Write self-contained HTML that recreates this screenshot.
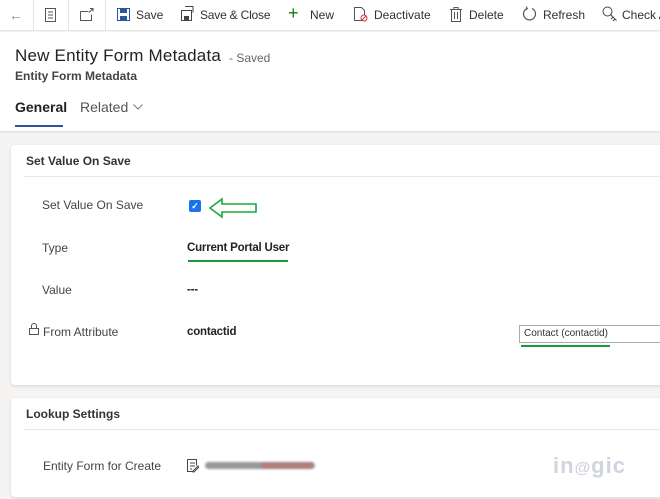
<!DOCTYPE html>
<html><head><style>
*{margin:0;padding:0;box-sizing:border-box}
body{width:660px;height:499px;overflow:hidden;background:#f5f4f3;font-family:"Liberation Sans",sans-serif;color:#323130;position:relative}
.a{position:absolute;white-space:nowrap}
.tb{position:absolute;left:0;top:0;width:660px;height:31px;background:#fff;border-bottom:1px solid #e6e6e6;font-size:12px;color:#323130}
.sep{position:absolute;top:0;width:1px;height:31px;background:#e3e3e3}
.hdr{position:absolute;left:0;top:32px;width:660px;height:99px;background:#fff;box-shadow:0 1px 2px rgba(0,0,0,.12)}
.card{position:absolute;left:11px;width:660px;background:#fff;border-radius:4px;box-shadow:0 1px 3px rgba(0,0,0,.13)}
.lbl{font-size:12px;color:#444}
.val{font-size:11.5px;color:#222;font-weight:bold;letter-spacing:-0.2px}
</style></head><body>
<div class="tb">
<span class="a" style="left:9px;top:7px;font-size:14px;color:#888">←</span>
<div class="sep" style="left:33px"></div>
<svg class="a" style="left:45px;top:8px" width="11" height="14"><rect x=".5" y=".5" width="10" height="13" fill="none" stroke="#555"/><path d="M3 4h5M3 7h5M3 10h5" stroke="#555"/></svg>
<div class="sep" style="left:68px"></div>
<svg class="a" style="left:80px;top:8px" width="14" height="13"><path d="M.5 3.5h8M.5 3.5v9h11v-6" fill="none" stroke="#555"/><path d="M10 0.5l3 0v3M13 .5l-4 4" fill="none" stroke="#555"/></svg>
<div class="sep" style="left:105px"></div>
<svg class="a" style="left:117px;top:8px" width="13" height="13"><rect x=".5" y=".5" width="12" height="12" fill="none" stroke="#2b579a"/><rect x="3" y="1" width="7" height="4" fill="#2b579a"/><rect x="3" y="8" width="7" height="4" fill="#2b579a"/></svg>
<span class="a" style="left:136px;top:8px">Save</span>
<svg class="a" style="left:180px;top:6px" width="14" height="15"><rect x="1.5" y="4.5" width="10" height="10" fill="none" stroke="#444"/><rect x="4" y="10" width="5" height="4" fill="#444"/><path d="M5 .5h8v6" fill="none" stroke="#444"/></svg>
<span class="a" style="left:200px;top:8px;letter-spacing:-0.2px">Save &amp; Close</span>
<span class="a" style="left:288px;top:3px;font-size:18px;color:#107c10;font-weight:normal">+</span>
<span class="a" style="left:310px;top:8px">New</span>
<svg class="a" style="left:354px;top:7px" width="14" height="15"><path d="M.5.5h7l3 3v10H.5z" fill="none" stroke="#555"/><circle cx="10" cy="11" r="3" fill="#fff" stroke="#d13438"/><path d="M8 13l4-4" stroke="#d13438"/></svg>
<span class="a" style="left:374px;top:8px">Deactivate</span>
<svg class="a" style="left:450px;top:7px" width="12" height="15"><path d="M0 2.5h12M4 2.5V.5h4v2M1.5 2.5v12h9v-12M4.5 5v7M7.5 5v7" fill="none" stroke="#555"/></svg>
<span class="a" style="left:469px;top:8px">Delete</span>
<svg class="a" style="left:522px;top:6px" width="15" height="16"><path d="M5 2.5A6 6 0 1 0 10 2.5" fill="none" stroke="#555" stroke-width="1.2"/><path d="M4 .5l1.5 2-2 1.5" fill="none" stroke="#555"/></svg>
<span class="a" style="left:543px;top:8px">Refresh</span>
<svg class="a" style="left:602px;top:6px" width="16" height="16"><circle cx="5.5" cy="5.5" r="4.5" fill="none" stroke="#444"/><path d="M8.5 8.5l6 6M11 11l-2 2M13 13l-2 2" stroke="#444"/></svg>
<span class="a" style="left:622px;top:8px">Check A</span>
</div>
<div class="hdr">
<span class="a" style="left:15px;top:14px;font-size:17px;color:#222;letter-spacing:0.2px">New Entity Form Metadata</span>
<span class="a" style="left:229px;top:19px;font-size:12px;color:#666">- Saved</span>
<span class="a" style="left:15px;top:37px;font-size:12px;color:#444;font-weight:bold">Entity Form Metadata</span>
<span class="a" style="left:15px;top:67px;font-size:14px;color:#222;font-weight:bold">General</span>
<span class="a" style="left:80px;top:67px;font-size:14px;color:#555">Related</span>
<svg class="a" style="left:133px;top:72px" width="10" height="6"><path d="M.5.5l4.5 4.5 4.5-4.5" fill="none" stroke="#777"/></svg>
<div class="a" style="left:15px;top:93px;width:48px;height:2px;background:#2b579a"></div>
</div>
<div class="card" style="top:145px;height:240px">
<span class="a" style="left:15px;top:9px;font-size:12px;color:#333;font-weight:bold">Set Value On Save</span>
<div class="a" style="left:13px;top:31px;width:640px;height:1px;background:#e8e8e8"></div>
<span class="a lbl" style="left:31px;top:53px">Set Value On Save</span>
<div class="a" style="left:178px;top:55px;width:12px;height:12px;background:#1a73e8;border-radius:2px;color:#fff;font-size:9px;line-height:12px;text-align:center;font-weight:bold">✓</div>
<svg class="a" style="left:198px;top:52px" width="52" height="22"><path d="M1 11l12-9v5h34v8H13v5z" fill="none" stroke="#1ea83c" stroke-width="1.6"/></svg>
<span class="a lbl" style="left:31px;top:96px">Type</span>
<span class="a val" style="left:176px;top:97px">Current Portal User</span>
<div class="a" style="left:177px;top:115px;width:100px;height:2px;background:#1a9a3c"></div>
<span class="a lbl" style="left:31px;top:138px">Value</span>
<span class="a val" style="left:176px;top:139px">---</span>
<svg class="a" style="left:18px;top:178px" width="10" height="12"><rect x=".5" y="5.5" width="9" height="6" fill="none" stroke="#555"/><path d="M2.5 5.5V3a2.5 2.5 0 0 1 5 0v2.5" fill="none" stroke="#555"/></svg>
<span class="a lbl" style="left:32px;top:180px">From Attribute</span>
<span class="a val" style="left:176px;top:181px">contactid</span>
<div class="a" style="left:508px;top:180px;width:160px;height:18px;border:1px solid #aaa;font-size:10px;padding:2px 4px;color:#333">Contact (contactid)</div>
<div class="a" style="left:510px;top:200px;width:89px;height:2px;background:#1a9a3c"></div>
</div>
<div class="card" style="top:398px;height:99px">
<span class="a" style="left:15px;top:9px;font-size:12px;color:#333;font-weight:bold">Lookup Settings</span>
<div class="a" style="left:13px;top:31px;width:640px;height:1px;background:#e8e8e8"></div>
<span class="a lbl" style="left:32px;top:61px">Entity Form for Create</span>
<svg class="a" style="left:176px;top:61px" width="12" height="14"><path d="M.5.5h9v6M.5.5v12h5M3 4h5M3 7h5M3 10h2M6 12l5-5 1 1-5 5h-1z" fill="none" stroke="#444"/></svg>
<div class="a" style="left:194px;top:64px;width:110px;height:7px;background:#999;border-radius:4px;filter:blur(1px)"></div>
<div class="a" style="left:250px;top:65px;width:52px;height:5px;background:#c5706a;border-radius:3px;filter:blur(1px);opacity:.7"></div>
<span class="a" style="left:542px;top:55px;font-size:22px;font-weight:bold;color:#d0d4de;letter-spacing:1px">in<span style="font-size:16px">@</span>gic</span>
</div>
</body></html>
